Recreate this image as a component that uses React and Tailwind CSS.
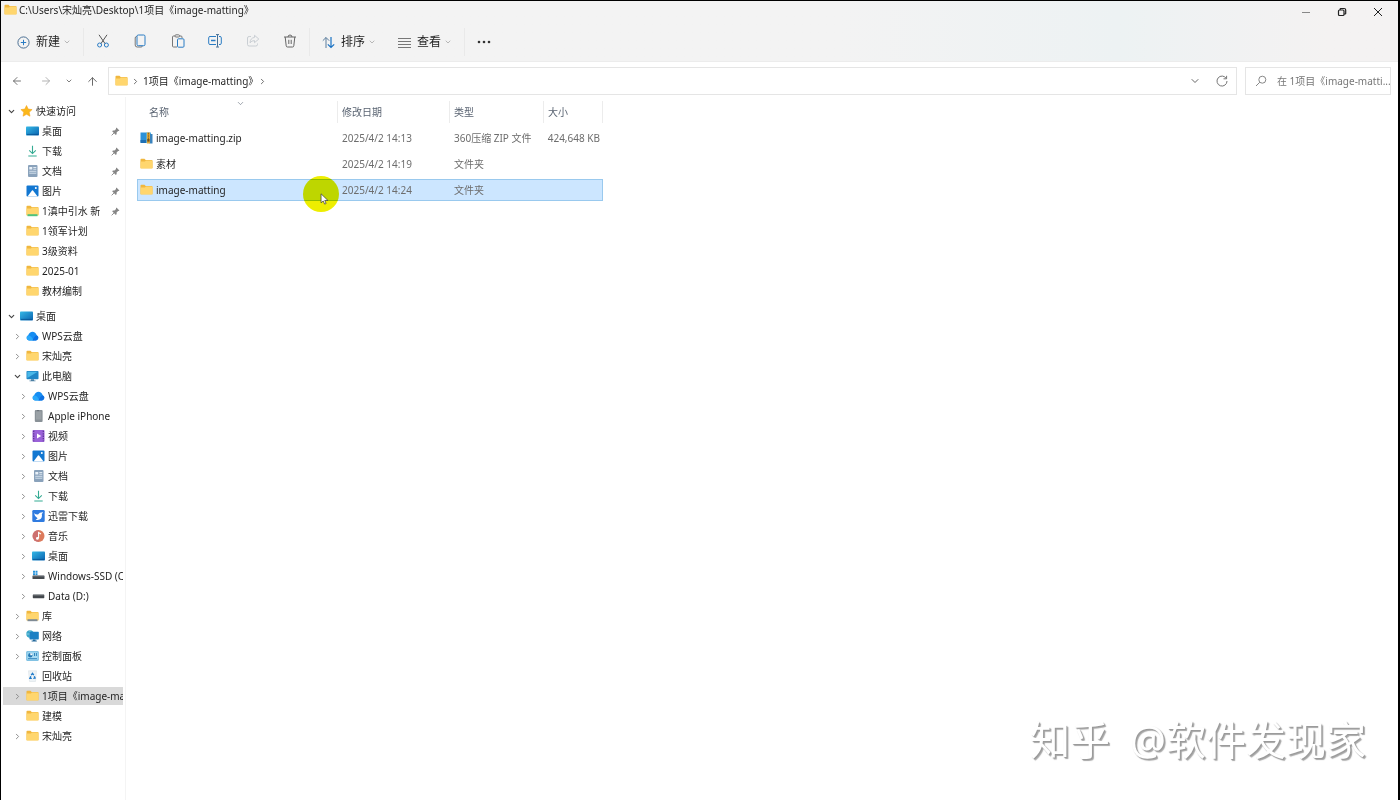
import React, { useState } from 'react';
import { ArrowLeft, ArrowRight, ArrowUp, ChevronDown, ChevronRight } from 'lucide-react';

const FolderIcon = ({ strip }) => (
  <svg viewBox="0 0 13 12" className="h-3 w-[13px] shrink-0">
    <path d="M.5 1.5q0-.8.8-.8h3.2l1.2 1.2h6q.8 0 .8.8v7.5H.5z" fill="#f0b73f" />
    <path d="M.5 3.6h4.4l1-1h5.8q.8 0 .8.8v6.4q0 .8-.8.8H1.3q-.8 0-.8-.8z" fill="#ffd66e" />
    {strip && <path d="M1.5 9.2h10v2h-10z" fill={strip} />}
  </svg>
);

const DesktopIcon = () => (
  <svg viewBox="0 0 13 12" className="h-3 w-[13px] shrink-0">
    <defs>
      <linearGradient id="desk" x1="0" y1="0" x2="1" y2="1">
        <stop offset="0" stopColor="#35b8e6" />
        <stop offset="1" stopColor="#0a63b0" />
      </linearGradient>
    </defs>
    <rect x="0" y="1.5" width="13" height="9" rx=".8" fill="url(#desk)" />
    <path d="M1 9.4h11" stroke="#075190" strokeWidth=".8" />
  </svg>
);

const icons = {
  folder: <FolderIcon />,
  syncFolder: <FolderIcon strip="#4fc27d" />,
  library: <FolderIcon strip="#7f8b95" />,
  desktop: <DesktopIcon />,
  star: (
    <svg viewBox="0 0 13 12" className="h-3 w-[13px] shrink-0">
      <path d="M6.5.5l1.7 3.6 3.9.5-2.9 2.7.8 3.9-3.5-1.9L3 11.2l.8-3.9L.9 4.6l3.9-.5z" fill="#fbb81b" stroke="#f5a623" strokeWidth=".6" strokeLinejoin="round" />
    </svg>
  ),
  download: (
    <svg viewBox="0 0 13 12" className="h-3 w-[13px] shrink-0" fill="none" stroke="#35ab93" strokeWidth="1.1">
      <path d="M6.5.8v7.6M3.2 5.4l3.3 3.2 3.3-3.2M2.3 11h8.4" />
    </svg>
  ),
  document: (
    <svg viewBox="0 0 13 12" className="h-3 w-[13px] shrink-0">
      <rect x="2" y="0" width="9.5" height="12" rx="1" fill="#8aa2bb" />
      <path d="M3.3 2h3v2.500h-3z" fill="#e9f1f8" />
      <path d="M7.300 2.500h3M7.300 4.200h3" stroke="#e9f1f8" strokeWidth=".9" />
      <path d="M3.300 5.800h7v2.800h-7z" fill="#dfeaf4" />
      <path d="M3.300 7.200h7" stroke="#5d7d9e" strokeWidth=".7" />
    </svg>
  ),
  picture: (
    <svg viewBox="0 0 13 12" className="h-3 w-[13px] shrink-0">
      <rect x=".5" y=".5" width="12" height="11" rx="1" fill="#1277d1" />
      <path d="M1.5 11.5L6 5.6q.5-.6 1 0l4.6 5.9z" fill="#fff" />
      <circle cx="9.8" cy="3" r="1" fill="#fff" />
    </svg>
  ),
  cloud: (
    <svg viewBox="0 0 13 12" className="h-3 w-[13px] shrink-0">
      <path d="M3 10.500a2.800 2.800 0 01-.8-5.300C3 3.400 4.600 1.800 6.500 1.800c2 0 3.500 1.600 4.200 3.400a2.800 2.800 0 01-.6 5.300z" fill="#168df2" />
      <path d="M3 10.500a2.800 2.800 0 01-.8-5.300c2.200.1 3.900 2.200 5.600 5.300z" fill="#2aa8fa" />
      <path d="M6.500 10.500c1-2.600 2.300-4.400 4.200-5.300a2.800 2.800 0 01-.6 5.300z" fill="#0d70e3" />
    </svg>
  ),
  pc: (
    <svg viewBox="0 0 13 12" className="h-3 w-[13px] shrink-0">
      <rect x=".5" y="1" width="12" height="8.200" rx=".8" fill="#1f86c6" />
      <path d="M1.300 1.800h10.400L1.300 8z" fill="#49b8e8" />
      <path d="M5 9.200h3v1.200h1.500v.8h-6v-.8H5z" fill="#4b7fa3" />
    </svg>
  ),
  phone: (
    <svg viewBox="0 0 13 12" className="h-3 w-[13px] shrink-0">
      <rect x="2.800" y="0" width="7.800" height="12" rx="1" fill="#899197" />
      <path d="M4 1.500h5.400v8H4z" fill="#9aa1a6" />
      <path d="M5 .6h2" stroke="#555d63" strokeWidth=".6" />
    </svg>
  ),
  video: (
    <svg viewBox="0 0 13 12" className="h-3 w-[13px] shrink-0">
      <rect x=".5" y="0" width="12" height="12" rx="1" fill="#9a62d8" />
      <path d="M1.700 .8v10.400M11.300 .8v10.400" stroke="#5a3191" strokeWidth="1.200" strokeDasharray="1.300 1.100" />
      <path d="M5 3.500v5l4.200-2.500z" fill="#fff" />
    </svg>
  ),
  thunder: (
    <svg viewBox="0 0 13 12" className="h-3 w-[13px] shrink-0">
      <rect x=".3" y="0" width="12.400" height="12" rx="1.200" fill="#2f7be0" />
      <path d="M2 3.200q2 1.600 4 1.400Q7.500 2 11.200 2.200L9.800 3.900q.8 4-2.200 5.700-2.200.8-4-.2 1.400-.2 2-1.200Q2.700 7 2 3.200z" fill="#fff" />
    </svg>
  ),
  music: (
    <svg viewBox="0 0 13 12" className="h-3 w-[13px] shrink-0">
      <circle cx="6.500" cy="6" r="6" fill="#dc7a5c" />
      <path d="M6.500 0a6 6 0 000 12z" fill="#bd6681" opacity=".5" />
      <path d="M6.600 8.300V2.500l2.400 1.400" fill="none" stroke="#fff" strokeWidth="1.100" />
      <circle cx="5.400" cy="8.400" r="1.400" fill="#fff" />
    </svg>
  ),
  systemDrive: (
    <svg viewBox="0 0 13 12" className="h-3 w-[13px] shrink-0">
      <path d="M1 .8h2v2H1zM3.500 .8h2v2h-2zM1 3.300h2v2H1zM3.500 3.300h2v2h-2z" fill="#2593dc" />
      <rect x=".5" y="5.500" width="12" height="3.500" rx=".6" fill="#464b50" />
      <path d="M1 5.900h11" stroke="#9ea3a7" strokeWidth=".7" />
    </svg>
  ),
  drive: (
    <svg viewBox="0 0 13 12" className="h-3 w-[13px] shrink-0">
      <rect x=".8" y="4.500" width="11.500" height="3.700" rx=".6" fill="#43484d" />
      <path d="M1.200 4.900h10.600" stroke="#9ea3a7" strokeWidth=".8" />
    </svg>
  ),
  network: (
    <svg viewBox="0 0 13 12" className="h-3 w-[13px] shrink-0">
      <circle cx="4" cy="4" r="3.700" fill="#3aa7c9" />
      <path d="M.5 4h7M4 .5v7" stroke="#b7e3ef" strokeWidth=".6" />
      <rect x="3.500" y="1.800" width="9.300" height="7.600" rx=".6" fill="#1b80c4" />
      <path d="M7 9.400h2.500v1.200h1.300v.9H5.600v-.9H7z" fill="#24699b" />
    </svg>
  ),
  control: (
    <svg viewBox="0 0 13 12" className="h-3 w-[13px] shrink-0">
      <rect x=".3" y="1.200" width="12.400" height="9.600" rx=".7" fill="#5aaeda" />
      <rect x="1.200" y="2.200" width="10.600" height="7.600" fill="#a9dcf3" />
      <circle cx="4.300" cy="5.300" r="2.200" fill="#2479b5" />
      <path d="M4.300 5.300V3.100a2.200 2.200 0 012.200 2.200z" fill="#fff" />
      <path d="M8.500 3v3M10.400 3v3M2 8.700h9" stroke="#2479b5" strokeWidth=".9" />
    </svg>
  ),
  recycle: (
    <svg viewBox="0 0 13 12" className="h-3 w-[13px] shrink-0">
      <path d="M2.500 .8h8l-1 10.700h-6z" fill="#eef3f6" stroke="#d5dde3" strokeWidth=".5" />
      <path d="M5.200 5.200L6.500 3.300l1.300 1.900M8.300 6.200l.8 1.900-1.800.3M5.800 8.400H3.900l.9-2.200" fill="none" stroke="#1b78c9" strokeWidth="1.300" />
    </svg>
  ),
  zip: (
    <svg viewBox="0 0 13 12" className="h-3 w-[13px] shrink-0">
      <path d="M.5 .5h6v10H.5z" fill="#2b91d8" />
      <path d="M.5 8h6v3h-6z" fill="#1f70b4" />
      <path d="M6 .5h5v10.500H6z" fill="#4aaee6" />
      <path d="M9.500 2h3v9.500h-3z" fill="#3a83bd" />
      <path d="M6.800 .5h3.200v11H6.800z" fill="#e0a83a" />
      <path d="M8.400 .8v6.500" stroke="#755014" strokeWidth="1" strokeDasharray="1 .8" />
      <rect x="7.300" y="7" width="2.200" height="2.600" fill="#76501a" />
    </svg>
  ),
};

const quickAccess = [
  { label: '快速访问', icon: 'star', level: 0, open: true },
  { label: '桌面', icon: 'desktop', level: 1, pinned: true },
  { label: '下载', icon: 'download', level: 1, pinned: true },
  { label: '文档', icon: 'document', level: 1, pinned: true },
  { label: '图片', icon: 'picture', level: 1, pinned: true },
  { label: '1滇中引水 新', icon: 'syncFolder', level: 1, pinned: true },
  { label: '1领军计划', icon: 'folder', level: 1 },
  { label: '3级资料', icon: 'folder', level: 1 },
  { label: '2025-01', icon: 'folder', level: 1 },
  { label: '教材编制', icon: 'folder', level: 1 },
];

const desktopTree = [
  { label: '桌面', icon: 'desktop', level: 0, open: true },
  { label: 'WPS云盘', icon: 'cloud', level: 1, open: false },
  { label: '宋灿亮', icon: 'folder', level: 1, open: false },
  { label: '此电脑', icon: 'pc', level: 1, open: true },
  { label: 'WPS云盘', icon: 'cloud', level: 2, open: false },
  { label: 'Apple iPhone', icon: 'phone', level: 2, open: false },
  { label: '视频', icon: 'video', level: 2, open: false },
  { label: '图片', icon: 'picture', level: 2, open: false },
  { label: '文档', icon: 'document', level: 2, open: false },
  { label: '下载', icon: 'download', level: 2, open: false },
  { label: '迅雷下载', icon: 'thunder', level: 2, open: false },
  { label: '音乐', icon: 'music', level: 2, open: false },
  { label: '桌面', icon: 'desktop', level: 2, open: false },
  { label: 'Windows-SSD (C:)', icon: 'systemDrive', level: 2, open: false },
  { label: 'Data (D:)', icon: 'drive', level: 2, open: false },
  { label: '库', icon: 'library', level: 1, open: false },
  { label: '网络', icon: 'network', level: 1, open: false },
  { label: '控制面板', icon: 'control', level: 1, open: false },
  { label: '回收站', icon: 'recycle', level: 1 },
  { label: '1项目《image-matting》', icon: 'folder', level: 1, open: false, current: true },
  { label: '建模', icon: 'folder', level: 1 },
  { label: '宋灿亮', icon: 'folder', level: 1, open: false },
];

const files = [
  { name: 'image-matting.zip', icon: 'zip', date: '2025/4/2 14:13', type: '360压缩 ZIP 文件', size: '424,648 KB' },
  { name: '素材', icon: 'folder', date: '2025/4/2 14:19', type: '文件夹', size: '' },
  { name: 'image-matting', icon: 'folder', date: '2025/4/2 14:24', type: '文件夹', size: '' },
];

const indents = ['pl-0.5', 'pl-2', 'pl-3.5'];

const PinIcon = () => (
  <svg viewBox="0 0 10 10" className="ml-auto mr-[3px] size-[9px] shrink-0">
    <path d="M6 .6l3.400 3.400-1 .5-.5-.1-1.700 1.800.1 1.700-.9.900L1.300 4.700l.9-.9 1.700.1 1.700-1.700-.1-.6z" fill="#868686" />
    <path d="M3.400 6.600L.7 9.300" stroke="#868686" strokeWidth="1" />
  </svg>
);

const TreeItem = ({ item }) => (
  <li className="h-5 py-px">
    <button
      type="button"
      className={`flex h-[18px] w-full items-center overflow-hidden whitespace-nowrap text-left ${indents[item.level]} ${item.current ? 'bg-[#d9d9d9]' : 'hover:bg-[#e5f3ff]'}`}
    >
      <span className="flex w-3 shrink-0 justify-center">
        {item.open === true && <ChevronDown size={9} strokeWidth={3} color="#444" />}
        {item.open === false && <ChevronRight size={9} strokeWidth={2.5} color="#888" />}
      </span>
      <span className="mx-[3px] shrink-0">{icons[item.icon]}</span>
      <span>{item.label}</span>
      {item.pinned && <PinIcon />}
    </button>
  </li>
);

const Divider = () => <span className="h-7 w-px bg-[#e9e9e9]" />;

const Pointer = () => (
  <span className="pointer-events-none absolute -top-1 left-[165px] size-9">
    <span className="absolute inset-0 rounded-full bg-[#eeee00] mix-blend-multiply" />
    <svg viewBox="0 0 10 14" className="absolute left-[17px] top-[17px] h-3 w-[9px]">
      <path d="M1 1v10.500l2.500-2.200L5.200 13l1.700-.8L5.300 8.700H9z" fill="#fff" stroke="#333" strokeWidth=".8" />
    </svg>
  </span>
);

const App = () => {
  const [selected, setSelected] = useState('image-matting');
  const [query, setQuery] = useState('');

  return (
    <div className="relative flex min-h-screen flex-col border-l border-r-2 border-t border-black bg-white font-['Noto_Sans','Noto_Sans_CJK_SC',sans-serif] text-[10px] leading-4 text-[#1f1f1f]">
      <header className="border-b border-[#ececec] bg-linear-to-r from-[#f3f3f3] from-60% via-[#edf2f3] via-80% to-[#f4f2f2] to-95%">
        <div className="flex h-[22px] items-start">
          <h1 className="flex items-center gap-0.5 pl-[3px] pt-px">
            {icons.folder}
            <span>C:\Users\宋灿亮\Desktop\1项目《image-matting》</span>
          </h1>
          <div className="ml-auto flex h-[22px] items-center pr-0.5 text-[#222]">
            <button type="button" aria-label="最小化" className="flex w-9 justify-center">
              <svg viewBox="0 0 10 10" className="size-[10px]" stroke="#888"><path d="M1 5.500h8" /></svg>
            </button>
            <button type="button" aria-label="还原" className="flex w-9 justify-center">
              <svg viewBox="0 0 10 10" className="size-[10px]" fill="none" stroke="currentColor" strokeWidth="1.200">
                <rect x="1.500" y="3" width="5.500" height="5.500" rx="1" />
                <path d="M3.200 3V2q0-.5.5-.5h3.500Q8.700 1.500 8.700 3v3.500q0 .5-.5.500H7" />
              </svg>
            </button>
            <button type="button" aria-label="关闭" className="flex w-9 justify-center">
              <svg viewBox="0 0 10 10" className="size-[10px]" stroke="currentColor"><path d="M1 1l8 8M9 1L1 9" /></svg>
            </button>
          </div>
        </div>

        <div className="flex h-[38px] items-center pl-4 text-xs">
          <button type="button" className="mr-3 flex items-center">
            <svg viewBox="0 0 13 13" className="mr-1.5 size-[13px]" fill="none" stroke="#4a6f93">
              <circle cx="6.500" cy="6.500" r="5.600" />
              <path d="M6.500 3.800v5.400M3.800 6.500h5.400" stroke="#2a7cc4" />
            </svg>
            新建
            <ChevronDown size={8} color="#999" className="ml-[3px]" />
          </button>
          <Divider />
          <div className="-mt-0.5 flex w-[225px]">
            <button type="button" aria-label="剪切" className="flex flex-1 justify-center">
              <svg viewBox="0 0 14 14" className="size-[14px]" fill="none">
                <path d="M3 .8l6.200 9M11 .8l-6.200 9" stroke="#555" />
                <circle cx="3.600" cy="11" r="2" stroke="#2a7cc4" />
                <circle cx="10.400" cy="11" r="2" stroke="#2a7cc4" />
              </svg>
            </button>
            <button type="button" aria-label="复制" className="flex flex-1 justify-center">
              <svg viewBox="0 0 14 14" className="size-[14px]" fill="none">
                <path d="M4 2.500H3.500Q2.200 2.700 2.200 4v7q0 2 2 2H8q1.200 0 1.500-1" stroke="#777" />
                <rect x="4" y="1" width="8" height="10.700" rx="1.300" stroke="#2a7cc4" />
              </svg>
            </button>
            <button type="button" aria-label="粘贴" className="flex flex-1 justify-center">
              <svg viewBox="0 0 14 14" className="size-[14px]" fill="none">
                <path d="M4 2H2.500q-1 0-1 1v9q0 1 1 1H6M8.500 2H10q1 0 1 1v1" stroke="#777" />
                <rect x="4" y=".8" width="4.500" height="2.200" rx="1" stroke="#777" />
                <rect x="6.500" y="4.800" width="6.500" height="8.400" rx="1" stroke="#2a7cc4" />
              </svg>
            </button>
            <button type="button" aria-label="重命名" className="flex flex-1 justify-center">
              <svg viewBox="0 0 14 14" className="size-[14px]" fill="none">
                <path d="M8 2.500H2q-1.300 0-1.300 1.300v5.400q0 1.300 1.300 1.300h6M11 2.500h1q1.300 0 1.300 1.300v5.400q0 1.300-1.300 1.300h-1" stroke="#2a7cc4" />
                <path d="M3 6.500h4.500" stroke="#2a7cc4" strokeWidth="1.500" />
                <path d="M9.500 .8v12M8 .6h3M8 13h3" stroke="#456f96" />
              </svg>
            </button>
            <button type="button" aria-label="共享" disabled className="flex flex-1 justify-center">
              <svg viewBox="0 0 14 14" className="size-[14px]" fill="none" stroke="#c9ced3">
                <path d="M5 2.500H3.200Q1.500 2.500 1.500 4v6.500q0 1.500 1.700 1.500h6.600q1.700 0 1.700-1.500V9.500" />
                <path d="M8.500 1.300L12.800 5 8.500 8.700V6.600Q5.600 6.500 4 8.800q.3-4.800 4.500-5.400z" strokeLinejoin="round" />
              </svg>
            </button>
            <button type="button" aria-label="删除" className="flex flex-1 justify-center">
              <svg viewBox="0 0 14 14" className="size-[14px]" fill="none" stroke="#666">
                <path d="M1 3h12M5 3q0-2 2-2t2 2M2.200 3l1 8.800q.1 1.200 1.300 1.200h5q1.200 0 1.300-1.200l1-8.800M5.800 5.800v4.200M8.200 5.800v4.200" />
              </svg>
            </button>
          </div>
          <Divider />
          <button type="button" className="ml-3 flex items-center">
            <svg viewBox="0 0 13 13" className="mr-1.5 size-[13px]" fill="none">
              <path d="M4 12V1.500M.8 4.700L4 1.500l3.200 3.200" stroke="#5b7d9d" />
              <path d="M9 1v10.500M5.800 8.300L9 11.500l3.200-3.200" stroke="#1972c4" strokeWidth="1.200" />
            </svg>
            排序
            <ChevronDown size={8} color="#999" className="ml-[3px]" />
          </button>
          <button type="button" className="ml-[22px] mr-3 flex items-center">
            <svg viewBox="0 0 13 13" className="mr-1.5 size-[13px]" stroke="#777">
              <path d="M0 2.500h13M0 5.500h13M0 8.500h13M0 11.500h13" />
            </svg>
            查看
            <ChevronDown size={8} color="#999" className="ml-[3px]" />
          </button>
          <Divider />
          <button type="button" aria-label="更多" className="ml-3">
            <svg viewBox="0 0 14 4" className="h-1 w-[14px]" fill="#333">
              <circle cx="2" cy="2" r="1.300" />
              <circle cx="7" cy="2" r="1.300" />
              <circle cx="12" cy="2" r="1.300" />
            </svg>
          </button>
        </div>
      </header>

      <nav className="flex h-[35px] items-center pl-0.5 pr-[7px] pt-[3px] text-[#666]">
        <button type="button" aria-label="后退" className="flex w-7 justify-center"><ArrowLeft size={12} strokeWidth={1.8} /></button>
        <button type="button" aria-label="前进" className="flex w-[29px] justify-center text-[#aaa]"><ArrowRight size={12} strokeWidth={1.8} /></button>
        <button type="button" aria-label="最近" className="flex w-[18px] justify-center"><ChevronDown size={8} strokeWidth={2.5} /></button>
        <button type="button" aria-label="向上" className="mr-0.5 flex w-7 justify-center"><ArrowUp size={13} strokeWidth={1.8} /></button>
        <div className="flex h-7 flex-1 items-center border border-[#e5e5e5] bg-white pl-1.5 pr-2">
          {icons.folder}
          <ChevronRight size={9} strokeWidth={2.5} className="mx-[3px]" />
          <a href="#" className="text-[#1f1f1f]">1项目《image-matting》</a>
          <ChevronRight size={9} strokeWidth={2.5} />
          <button type="button" aria-label="历史" className="ml-auto"><ChevronDown size={12} strokeWidth={2} /></button>
          <button type="button" aria-label="刷新" className="ml-[15px]">
            <svg viewBox="0 0 12 12" className="size-3" fill="none" stroke="#777">
              <path d="M10.300 3.500A5 5 0 1011 6M10.600 .8v3H7.500" />
            </svg>
          </button>
        </div>
        <label className="ml-2 flex h-7 w-[146px] items-center border border-[#e5e5e5] pl-[9px]">
          <svg viewBox="0 0 12 12" className="mr-2.5 size-3 shrink-0" fill="none" stroke="#888">
            <circle cx="7.300" cy="4.700" r="3.500" />
            <path d="M4.800 7.200L1 11" />
          </svg>
          <input
            type="text"
            aria-label="搜索"
            value={query}
            onChange={(e) => setQuery(e.target.value)}
            placeholder="在 1项目《image-matti..."
            className="w-full min-w-0 outline-none placeholder:text-[#777]"
          />
        </label>
      </nav>

      <div className="flex flex-1">
        <aside className="w-[125px] shrink-0 border-r border-[#f4f4f4] pl-0.5 pr-0.5 pt-1">
          <ul className="mb-[5px]">
            {quickAccess.map((item) => <TreeItem key={item.label} item={item} />)}
          </ul>
          <ul>
            {desktopTree.map((item, i) => <TreeItem key={i} item={item} />)}
          </ul>
        </aside>

        <main className="min-w-0 flex-1 pl-[11px]">
          <table className="w-[466px] table-fixed border-separate border-spacing-x-0 border-spacing-y-1 whitespace-nowrap text-left text-[#6d6d6d]">
            <thead>
              <tr className="h-[22px] text-[#5a6472]">
                <th className="relative w-[201px] border-r border-[#ececec] pl-3 font-normal">
                  名称
                  <ChevronDown size={9} strokeWidth={1.5} className="absolute -top-0.5 left-[99px]" />
                </th>
                <th className="w-28 border-r border-[#ececec] pl-1 font-normal">修改日期</th>
                <th className="w-[94px] border-r border-[#ececec] pl-1 font-normal">类型</th>
                <th className="border-r border-[#ececec] pl-1 font-normal">大小</th>
              </tr>
            </thead>
            <tbody>
              {files.map((file) => {
                const active = file.name === selected;
                const cell = active ? 'border-y border-[#99c9ee] bg-[#cce6ff]' : 'border-y border-transparent';
                return (
                  <tr key={file.name} className="h-[22px]" onClick={() => setSelected(file.name)}>
                    <td className={`relative border-l pl-0.5 text-[#1f1f1f] ${cell}`}>
                      <span className="flex items-center gap-[3px]">
                        {icons[file.icon]}
                        <span>{file.name}</span>
                      </span>
                      {active && <Pointer />}
                    </td>
                    <td className={`pl-1 ${cell}`}>{file.date}</td>
                    <td className={`pl-1 ${cell}`}>{file.type}</td>
                    <td className={`border-r pr-0.5 text-right ${cell}`}>{file.size}</td>
                  </tr>
                );
              })}
            </tbody>
          </table>
        </main>
      </div>

      <p className="pointer-events-none absolute bottom-8 right-8 flex gap-5 text-[40px] leading-[56px] text-white [text-shadow:1px_1px_1px_#999,2px_2px_1px_#aaa]">
        <span>知乎</span>
        <span>@软件发现家</span>
      </p>
    </div>
  );
};

export default App;
